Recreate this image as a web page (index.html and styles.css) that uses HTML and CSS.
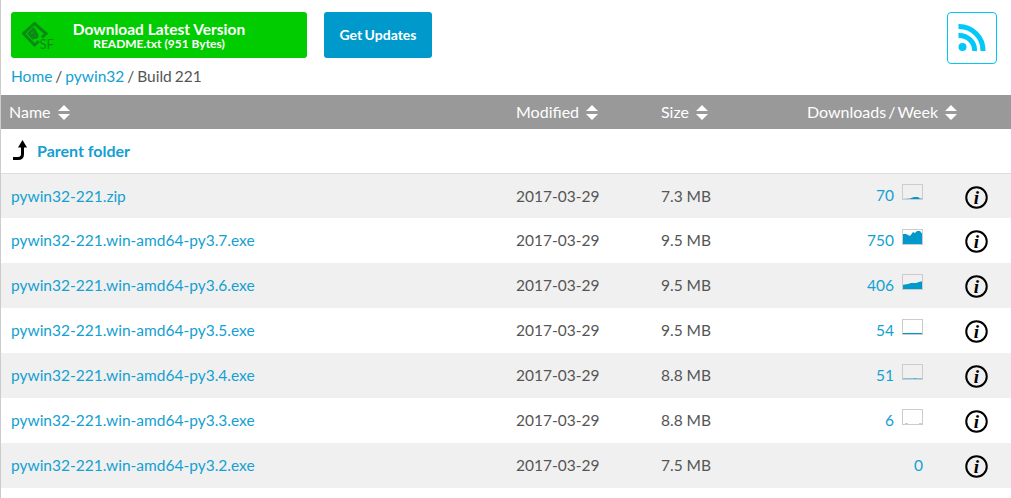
FILE: index.html
```html
<!doctype html>
<html>
	<head>
		<title>pywin32 / Build 221</title>
		<link rel="stylesheet" href="styles.css">
	</head>
	<body>
		<div class="topbar">
			<a class="download-btn" href="#">
				<svg class="sf-logo" width="34" height="30" viewBox="0 0 34 30">
					<path class="sf-mark" d="M17 19 L12.500 23 L1.500 11.500 L12.500 1.500 L24 11.500 L20 15.500 M12.500 6 L7 11.500 L12 17"/>
					<path class="sf-drop" d="M13 6 C12 9.500 9.500 11 9.500 13.500 A3.500 3.500 0 0 0 16.500 13.500 C16.500 11 14 9.500 13 6 Z"/>
					<text class="sf-text" x="17.500" y="27">SF</text>
				</svg>
				<span class="download-text">
					<b class="download-title">Download Latest Version</b>
					<b class="download-sub">README.txt (951 Bytes)</b>
				</span>
			</a>
			<a class="updates-btn" href="#">Get Updates</a>
			<a class="rss-btn" href="#">
				<svg width="30" height="30" viewBox="0 0 30 30">
					<circle cx="5.500" cy="24" r="4" fill="#00c8f8"/>
					<path d="M1.500 12.500 A15.500 14.500 0 0 1 17.500 28" class="rss-arc"/>
					<path d="M1.500 3.500 A24 24 0 0 1 26 28" class="rss-arc"/>
				</svg>
			</a>
		</div>
		<div class="crumbs">
			<a href="#">Home</a> / <a href="#">pywin32</a> / Build 221
		</div>
		<table class="files" cellspacing="0">
			<colgroup>
				<col class="col-name">
				<col class="col-date">
				<col class="col-size">
				<col class="col-count">
				<col class="col-info">
			</colgroup>
			<tr class="head">
				<th class="name-head">Name<svg class="sort" width="12" height="15" viewBox="0 0 12 15"><path d="M6 0 L12 6 H0 Z M0 9 H12 L6 15 Z"/></svg></th>
				<th>Modified<svg class="sort" width="12" height="15" viewBox="0 0 12 15"><path d="M6 0 L12 6 H0 Z M0 9 H12 L6 15 Z"/></svg></th>
				<th>Size<svg class="sort" width="12" height="15" viewBox="0 0 12 15"><path d="M6 0 L12 6 H0 Z M0 9 H12 L6 15 Z"/></svg></th>
				<th class="dl-head" colspan="2">Downloads / Week<svg class="sort" width="12" height="15" viewBox="0 0 12 15"><path d="M6 0 L12 6 H0 Z M0 9 H12 L6 15 Z"/></svg></th>
			</tr>
			<tr class="parent">
				<td colspan="5">
					<a href="#">
						<svg class="up-arrow" width="16" height="21" viewBox="0 0 16 21">
							<path d="M1 18.500 H6 Q10.500 18.500 10.500 14 V6" class="up-line"/>
							<path d="M10.500 0 L15 7.500 H6 Z"/>
						</svg>
						Parent folder
					</a>
				</td>
			</tr>
			<tr class="odd first">
				<td class="name"><a href="#">pywin32-221.zip</a></td>
				<td>2017-03-29</td>
				<td>7.3 MB</td>
				<td class="count"><a href="#">70</a><svg class="spark" width="21" height="16" viewBox="0 0 21 16"><path class="spark-fill" d="M0 15 L8 14.500 L12 13 L16 13 L18 14.500 L21 14.500 V16 H0 Z"/><rect class="spark-box" x="0.500" y="0.500" width="20" height="15"/></svg></td>
				<td class="info"><svg width="23" height="23" viewBox="0 0 23 23"><circle class="info-ring" cx="11.500" cy="11.500" r="10.250"/><text class="info-i" x="11.500" y="17.500">i</text></svg></td>
			</tr>
			<tr>
				<td class="name"><a href="#">pywin32-221.win-amd64-py3.7.exe</a></td>
				<td>2017-03-29</td>
				<td>9.5 MB</td>
				<td class="count"><a href="#">750</a><svg class="spark" width="21" height="16" viewBox="0 0 21 16"><path class="spark-fill" d="M0 5 L4 5 L8 7 L11 3 L13 4 L15 2 L18 2 L21 6 V16 H0 Z"/><rect class="spark-box" x="0.500" y="0.500" width="20" height="15"/></svg></td>
				<td class="info"><svg width="23" height="23" viewBox="0 0 23 23"><circle class="info-ring" cx="11.500" cy="11.500" r="10.250"/><text class="info-i" x="11.500" y="17.500">i</text></svg></td>
			</tr>
			<tr class="odd">
				<td class="name"><a href="#">pywin32-221.win-amd64-py3.6.exe</a></td>
				<td>2017-03-29</td>
				<td>9.5 MB</td>
				<td class="count"><a href="#">406</a><svg class="spark" width="21" height="16" viewBox="0 0 21 16"><path class="spark-fill" d="M0 11 L6 10 L9 9 L14 9 L17 8 L21 7 V16 H0 Z"/><rect class="spark-box" x="0.500" y="0.500" width="20" height="15"/></svg></td>
				<td class="info"><svg width="23" height="23" viewBox="0 0 23 23"><circle class="info-ring" cx="11.500" cy="11.500" r="10.250"/><text class="info-i" x="11.500" y="17.500">i</text></svg></td>
			</tr>
			<tr>
				<td class="name"><a href="#">pywin32-221.win-amd64-py3.5.exe</a></td>
				<td>2017-03-29</td>
				<td>9.5 MB</td>
				<td class="count"><a href="#">54</a><svg class="spark" width="21" height="16" viewBox="0 0 21 16"><path class="spark-fill" d="M1 14 H20 V15 H1 Z"/><rect class="spark-box" x="0.500" y="0.500" width="20" height="15"/></svg></td>
				<td class="info"><svg width="23" height="23" viewBox="0 0 23 23"><circle class="info-ring" cx="11.500" cy="11.500" r="10.250"/><text class="info-i" x="11.500" y="17.500">i</text></svg></td>
			</tr>
			<tr class="odd">
				<td class="name"><a href="#">pywin32-221.win-amd64-py3.4.exe</a></td>
				<td>2017-03-29</td>
				<td>8.8 MB</td>
				<td class="count"><a href="#">51</a><svg class="spark" width="21" height="16" viewBox="0 0 21 16"><path class="spark-fill" d="M1 14.500 H12 L13 14 L14 14.500 H20 V15 H1 Z"/><rect class="spark-box" x="0.500" y="0.500" width="20" height="15"/></svg></td>
				<td class="info"><svg width="23" height="23" viewBox="0 0 23 23"><circle class="info-ring" cx="11.500" cy="11.500" r="10.250"/><text class="info-i" x="11.500" y="17.500">i</text></svg></td>
			</tr>
			<tr>
				<td class="name"><a href="#">pywin32-221.win-amd64-py3.3.exe</a></td>
				<td>2017-03-29</td>
				<td>8.8 MB</td>
				<td class="count"><a href="#">6</a><svg class="spark" width="21" height="16" viewBox="0 0 21 16"><path class="spark-faint" d="M3 14 H6 V15 H3 Z M17 14 H20 V15 H17 Z"/><rect class="spark-box" x="0.500" y="0.500" width="20" height="15"/></svg></td>
				<td class="info"><svg width="23" height="23" viewBox="0 0 23 23"><circle class="info-ring" cx="11.500" cy="11.500" r="10.250"/><text class="info-i" x="11.500" y="17.500">i</text></svg></td>
			</tr>
			<tr class="odd">
				<td class="name"><a href="#">pywin32-221.win-amd64-py3.2.exe</a></td>
				<td>2017-03-29</td>
				<td>7.5 MB</td>
				<td class="count no-chart"><a href="#">0</a></td>
				<td class="info"><svg width="23" height="23" viewBox="0 0 23 23"><circle class="info-ring" cx="11.500" cy="11.500" r="10.250"/><text class="info-i" x="11.500" y="17.500">i</text></svg></td>
			</tr>
		</table>
	</body>
</html>
```

FILE: styles.css
```css
html, body {
	margin: 0;
	background: white;
}

body {
	font-family: Lato, "Open Sans", sans-serif;
	font-size: 15.500px;
	color: #555;
	border-left: 1px solid #ccc;
	height: 498px;
	box-sizing: border-box;
	overflow: hidden;
}

a {
	color: #13a0d2;
	text-decoration: none;
}

.topbar {
	display: flex;
	align-items: flex-start;
	padding: 12px 13px 0 10px;
	height: 52px;
}

.download-btn {
	display: flex;
	width: 296px;
	height: 46px;
	padding-bottom: 1px;
	box-sizing: border-box;
	background: #00cc00;
	border-radius: 3px;
	color: white;
	position: relative;
	justify-content: center;
	align-items: center;
}

.sf-logo {
	position: absolute;
	left: 11px;
	top: 10px;
}

.sf-mark {
	fill: none;
	stroke: #0a8a14;
	stroke-width: 3;
}

.sf-drop {
	fill: #0a8a14;
}

.sf-text {
	font-family: Lato, sans-serif;
	font-size: 13px;
	fill: #0a8a14;
}

.download-text {
	display: flex;
	flex-direction: column;
	align-items: center;
}

.download-title {
	font-size: 15.500px;
	line-height: 18px;
}

.download-sub {
	font-size: 12px;
	line-height: 12px;
}

.updates-btn {
	width: 108px;
	height: 46px;
	padding-bottom: 2px;
	box-sizing: border-box;
	margin-left: 17px;
	background: #0099cc;
	border-radius: 3px;
	color: white;
	font-weight: bold;
	font-size: 14px;
	word-spacing: -1px;
	display: flex;
	justify-content: center;
	align-items: center;
}

.rss-btn {
	margin-left: auto;
	margin-right: 1px;
	width: 50px;
	height: 52px;
	box-sizing: border-box;
	border: 1px solid #00c8f8;
	border-radius: 4px;
	display: flex;
	justify-content: center;
	align-items: center;
}

.rss-arc {
	fill: none;
	stroke: #00c8f8;
	stroke-width: 5;
}

.crumbs {
	padding: 3px 0 0 10px;
	height: 31px;
	line-height: 19px;
	box-sizing: border-box;
	word-spacing: -1px;
}

.files {
	width: 1010px;
	border-collapse: separate;
	table-layout: fixed;
}

.col-name {
	width: 515px;
}

.col-date {
	width: 145px;
}

.col-size {
	width: 100px;
}

.col-count {
	width: 184px;
}

.files th, .files td {
	padding: 0 0 2px 0;
	box-sizing: border-box;
	text-align: left;
	font-weight: normal;
}

.head th {
	background: #999;
	color: white;
	height: 34px;
	font-size: 16px;
	word-spacing: -1px;
}

.sort {
	fill: white;
	vertical-align: -2px;
	margin-left: 7px;
}

.files .name-head {
	padding-left: 8px;
}

.files .dl-head {
	padding-left: 46px;
	word-spacing: -2px;
}

.files .parent td {
	height: 45px;
	border-bottom: 1px solid #ddd;
	padding: 0 0 2px 10px;
}

.parent a {
	font-weight: bold;
	font-size: 16px;
	display: flex;
	align-items: center;
	gap: 9px;
}

.up-arrow {
	fill: black;
	margin-left: 1px;
}

.up-line {
	fill: none;
	stroke: black;
	stroke-width: 3;
}

.files td {
	height: 45px;
}

.files .first td {
	height: 44px;
	padding-bottom: 1px;
}

.odd td {
	background: #f0f0f0;
}

.files .name {
	padding-left: 10px;
}

.files .count {
	text-align: right;
	padding-right: 22px;
	padding-bottom: 4px;
	white-space: nowrap;
}

.files .first .count {
	padding-bottom: 4px;
}

.files .no-chart {
	padding-bottom: 2px;
}

.spark {
	vertical-align: 1px;
	margin-left: 8px;
}

.spark-box {
	fill: none;
	stroke: #ccc;
}

.spark-fill {
	fill: #0099cc;
}

.spark-faint {
	fill: #a5dcef;
}

.files .info, .files .first .info {
	padding: 0;
}

.info svg {
	display: block;
	margin-left: 20px;
	margin-top: 2px;
}

.info-ring {
	fill: none;
	stroke: black;
	stroke-width: 2;
}

.info-i {
	font-family: "Liberation Serif", serif;
	font-weight: bold;
	font-style: italic;
	font-size: 19px;
	text-anchor: middle;
	fill: black;
}
```
